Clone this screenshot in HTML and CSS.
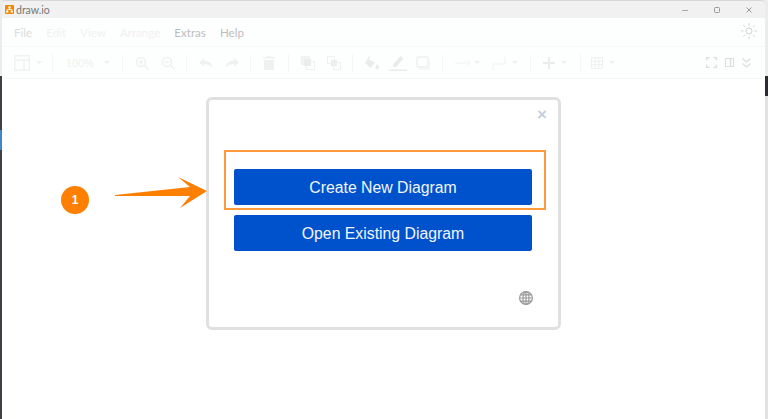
FILE: index.html
```html
<!DOCTYPE html>
<html lang="en">
<head>
  <meta charset="UTF-8" />
  <meta name="viewport" content="width=device-width, initial-scale=1.0"/>
  <title>draw.io</title>
  <link rel="stylesheet" href="styles.css">
</head>
<body>

  <div class="window">
    <div class="titlebar">
      <svg class="logo" width="9" height="9" viewBox="0 0 12 12">
        <rect width="12" height="12" rx="1" fill="#f08705"/>
        <path d="M6 3v3M3 9V6h6v3" fill="none" stroke="#fff" stroke-width="1"/>
        <rect x="4.500" y="1.800" width="3" height="2.800" fill="#fff"/>
        <rect x="1.600" y="7.400" width="2.800" height="2.800" fill="#fff"/>
        <rect x="7.600" y="7.400" width="2.800" height="2.800" fill="#fff"/>
      </svg>
      <span class="app-name">draw.io</span>
      <div class="win-buttons">
        <svg width="6" height="10" viewBox="0 0 6 10"><path d="M0 5.500h6" stroke="#aaa"/></svg>
        <svg width="6" height="10" viewBox="0 0 6 10"><rect x=".5" y="2.500" width="5" height="5" rx="1" fill="none" stroke="#999"/></svg>
        <svg width="6" height="10" viewBox="0 0 6 10"><path d="M.5 2.500l5 5M5.500 2.500l-5 5" stroke="#999"/></svg>
      </div>
    </div>

    <div class="menubar">
      <a class="menu faint">File</a>
      <a class="menu off">Edit</a>
      <a class="menu off">View</a>
      <a class="menu off">Arrange</a>
      <a class="menu">Extras</a>
      <a class="menu">Help</a>
      <svg class="sun" width="16" height="16" viewBox="0 0 16 16" fill="none" stroke="#d2d2d2">
        <circle cx="8" cy="8" r="3"/>
        <path d="M8 0v2.500M8 13.500V16M0 8h2.500M13.500 8H16M2.300 2.300l1.800 1.800M11.900 11.900l1.800 1.800M2.300 13.700l1.800-1.800M11.900 4.100l1.800-1.800"/>
      </svg>
    </div>

    <div class="toolbar">
      <svg class="tool" width="16" height="16" viewBox="0 0 16 16" fill="none" stroke="#f0f0f0" stroke-width="1.500"><rect x=".75" y=".75" width="14.500" height="14.500"/><path d="M1 5h14M10 5v10"/></svg>
      <span class="caret"></span>
      <span class="sep first-sep"></span>
      <span class="zoom-level">100%</span>
      <span class="caret far"></span>
      <span class="sep"></span>
      <svg class="tool" width="14" height="14" viewBox="0 0 14 14" fill="none" stroke="#eee" stroke-width="1.600"><circle cx="6" cy="6" r="4.500"/><path d="M9.500 9.500L13.500 13.500M3.800 6h4.400M6 3.800v4.400"/></svg>
      <svg class="tool" width="14" height="14" viewBox="0 0 14 14" fill="none" stroke="#eee" stroke-width="1.600"><circle cx="6" cy="6" r="4.500"/><path d="M9.500 9.500L13.500 13.500M3.800 6h4.400"/></svg>
      <span class="sep"></span>
      <svg class="tool" width="14" height="10" viewBox="0 0 14 10"><path d="M5 0L0 4.500 5 8.500V6c3.500 0 6.500 1 8.500 3.500C13 5.500 10 2.800 5 2.500z" fill="#eee"/></svg>
      <svg class="tool" width="14" height="10" viewBox="0 0 14 10"><path d="M9 0l5 4.500L9 8.500V6C5.500 6 2.500 7 .5 9.500 1 5.500 4 2.800 9 2.500z" fill="#eee"/></svg>
      <span class="sep"></span>
      <svg class="tool trash" width="12" height="14" viewBox="0 0 12 14"><path d="M0 1h3.500l1-1h3l1 1H12v1.500H0zM1 4h10v10H1z" fill="#eee"/></svg>
      <span class="sep"></span>
      <svg class="tool" width="14" height="14" viewBox="0 0 14 14"><rect x=".5" y=".5" width="8" height="8" fill="#f2f2f2" stroke="#eee"/><rect x="5.500" y="5.500" width="8" height="8" fill="#fdfefe" stroke="#eee"/><rect x="3" y="3" width="7" height="7" fill="#e9e9e9"/></svg>
      <svg class="tool" width="14" height="14" viewBox="0 0 14 14"><rect x=".5" y=".5" width="7" height="7" fill="#fdfefe" stroke="#eee"/><rect x="6.500" y="6.500" width="7" height="7" fill="#fdfefe" stroke="#eee"/><rect x="4" y="4" width="6" height="6" fill="#ececec"/></svg>
      <span class="sep"></span>
      <svg class="tool" width="14" height="14" viewBox="0 0 14 14"><path d="M4 0l1.200 1L3.500 3 10 6.500 5.500 12 0 7 3 2.200z" fill="#e8e8e8"/><path d="M12.200 8c1 1.600 1.700 2.500 1.700 3.500a1.700 1.700 0 0 1-3.400 0c0-1 .7-1.900 1.700-3.500z" fill="#e8e8e8"/></svg>
      <svg class="tool line-tool" width="18" height="16" viewBox="0 0 18 16"><path d="M4 9.500L11.500 1l3 2.500L7 12H4zM0 14.500h18V16H0z" fill="#e8e8e8"/></svg>
      <svg class="tool line-tool shadow" width="14" height="14" viewBox="0 0 14 14" fill="none" stroke="#eee" stroke-width="1.500"><rect x="1" y="1" width="11" height="10" rx="1"/><path d="M3 13h10V3" stroke="#f4f4f4"/></svg>
      <span class="sep"></span>
      <svg class="tool connector" width="16" height="8" viewBox="0 0 16 8" fill="none" stroke="#f0f0f0"><path d="M0 4h15M12 1l3 3-3 3"/></svg>
      <span class="caret"></span>
      <svg class="tool waypoint" width="14" height="14" viewBox="0 0 14 14" fill="none" stroke="#f0f0f0" stroke-width="1.200"><path d="M1 14V8h12V1"/></svg>
      <span class="caret far"></span>
      <span class="sep"></span>
      <svg class="tool" width="12" height="12" viewBox="0 0 12 12"><path d="M5 0h2v5h5v2H7v5H5V7H0V5h5z" fill="#e8e8e8"/></svg>
      <span class="caret farther"></span>
      <span class="sep"></span>
      <svg class="tool table" width="12" height="12" viewBox="0 0 12 12" fill="none" stroke="#eee"><path d="M.5.500h11v11H.5zM.5 4.200h11M.5 7.800h11M4.200.5v11M7.800.5v11"/></svg>
      <span class="caret"></span>
      <div class="toolbar-right">
        <svg width="11" height="11" viewBox="0 0 11 11" fill="none" stroke="#ddd" stroke-width="1.300"><path d="M.7 3.500V.7h2.800M7.500.7h2.800v2.800M.7 7.500v2.800h2.800M7.500 10.300h2.800V7.500"/></svg>
        <svg width="9" height="9" viewBox="0 0 9 9" fill="none" stroke="#ddd"><rect x=".5" y=".5" width="8" height="8"/><path d="M5.500 .5v8" stroke-width="1.500"/></svg>
        <svg width="9" height="10" viewBox="0 0 9 10" fill="none" stroke="#ddd" stroke-width="1.200"><path d="M.5.500L4.500 4l4-3.500M.5 5.500l4 3.500 4-3.500"/></svg>
      </div>
    </div>

    <div class="canvas">
      <span class="edge edge-left"></span>
      <span class="edge edge-blue"></span>
      <span class="edge edge-right"></span>
      <span class="edge edge-right-light"></span>

      <div class="dialog">
        <span class="close">&#215;</span>
        <div class="actions">
          <button class="action">Create New Diagram</button>
          <button class="action">Open Existing Diagram</button>
        </div>
        <svg class="globe" width="14" height="14" viewBox="0 0 14 14" fill="none" stroke="#999" stroke-width="1.200">
          <circle cx="7" cy="7" r="6.400"/>
          <ellipse cx="7" cy="7" rx="3" ry="6.400"/>
          <path d="M7 .6v12.800M.6 7h12.800M1.500 3.800h11M1.500 10.200h11"/>
        </svg>
      </div>

      <!-- anotacoes do tutorial por cima do dialogo -->
      <span class="highlight"></span>
      <span class="step">1</span>
      <svg class="arrow" width="100" height="40" viewBox="0 0 100 40">
        <path d="M5 21L80 13 68 3 97 17 70 34 80 22 5 22z" fill="#ff7f00"/>
      </svg>
    </div>
  </div>

</body>
</html>
```

FILE: styles.css
```css
* {
  box-sizing: border-box;
  margin: 0;
  padding: 0;
}

html, body {
  height: 100%;
  overflow: hidden;
}

body {
  font-family: "Liberation Sans", Arial, sans-serif;
  background-color: #fff;
}

.window {
  display: flex;
  flex-direction: column;
  height: 100%;
  background-color: #ececec;
}

.titlebar {
  display: flex;
  align-items: center;
  height: 18px;
  padding: 0 0 0 3px;
  margin: 0 3px 0 2px;
  background-color: #f1f1f1;
  border-top: 1px solid #d8d8d8;
  border-top-left-radius: 3px;
  border-top-right-radius: 4px;
}

.logo {
  margin-right: 2px;
}

.app-name {
  font-family: Lato, sans-serif;
  font-size: 10.500px;
  color: #777;
}

.win-buttons {
  display: flex;
  gap: 26px;
  margin-left: auto;
  padding-right: 13px;
}

.menubar {
  display: flex;
  align-items: center;
  gap: 14px;
  height: 28px;
  padding: 1px 8px 0 12px;
  margin: 0 3px 0 2px;
  background-color: #fdfefe;
  font-family: Lato, sans-serif;
  font-size: 11.600px;
}

.menu {
  color: #bdbdbd;
}

.menu.faint {
  color: #dcdcdc;
}

.menu.off {
  color: #f1f1f1;
}

.sun {
  margin-left: auto;
  margin-top: -3px;
}

.toolbar {
  display: flex;
  align-items: center;
  height: 33px;
  padding: 0 14px 0 12px;
  margin: 0 3px 0 2px;
  background-color: #fdfefe;
  border-top: 1px solid #f8f8f8;
  border-bottom: 1px solid #f6f6f6;
}

.tool {
  flex: none;
  margin-right: 12px;
  opacity: 0.85;
}

.tool.line-tool {
  margin-right: 11px;
  margin-left: -2px;
}

.tool.trash {
  margin-right: 14px;
}

.tool.shadow {
  margin-right: 13px;
}

.tool.connector {
  margin-right: 9px;
}

.tool.waypoint {
  margin-left: 7px;
}

.tool.table {
  margin-left: -2px;
}

.caret {
  flex: none;
  width: 0;
  height: 0;
  margin: 0 5px 0 -6px;
  border-left: 3px solid transparent;
  border-right: 3px solid transparent;
  border-top: 3px solid #f0f0f0;
}

.caret.far {
  margin-right: 13px;
}

.caret.farther {
  margin-right: 14px;
}

.sep {
  flex: none;
  width: 1px;
  height: 18px;
  margin: 0 12px 0 -1px;
  background-color: #f6f6f6;
}

.sep.first-sep {
  margin-left: 5px;
}

.zoom-level {
  flex: none;
  width: 45px;
  padding-left: 1px;
  font-size: 11px;
  color: #f0f0f0;
}

.toolbar-right {
  display: flex;
  align-items: center;
  gap: 8px;
  margin-left: auto;
}

.canvas {
  position: relative;
  flex: 1;
  background-color: #fff;
}

/* restos da janela de tras, aparecem nas bordas */
.edge {
  position: absolute;
  width: 2px;
}

.edge-left {
  left: 0;
  top: -3px;
  bottom: 0;
  background-color: #3d4146;
}

.edge-blue {
  left: 0;
  top: 51px;
  height: 20px;
  background-color: #3f87c6;
}

.edge-right {
  right: 0;
  width: 3px;
  top: -3px;
  height: 20px;
  background-color: #2a2d33;
}

.edge-right-light {
  right: 0;
  width: 3px;
  top: 17px;
  bottom: 0;
  background-color: #e2e2e2;
}

.dialog {
  position: absolute;
  left: 206px;
  top: 18px;
  width: 355px;
  height: 233px;
  padding: 69px 26px 0 25px;
  background-color: #fff;
  border: 3px solid #e0e0e0;
  border-radius: 6px;
}

.close {
  position: absolute;
  top: 6px;
  right: 11px;
  font-size: 17px;
  font-weight: bold;
  line-height: 17px;
  color: #c3d0e0;
}

.actions {
  display: flex;
  flex-direction: column;
  gap: 10px;
}

.action {
  height: 36px;
  padding-top: 1px;
  background-color: #0052cc;
  color: #f2f6fc;
  border: none;
  border-radius: 2px;
  font-family: "Liberation Sans", Arial, sans-serif;
  font-size: 15.800px;
}

.globe {
  position: absolute;
  right: 25px;
  bottom: 22px;
}

.highlight {
  position: absolute;
  left: 224px;
  top: 71px;
  width: 322px;
  height: 60px;
  border: 2px solid #ff9a3c;
}

.step {
  position: absolute;
  left: 61px;
  top: 107px;
  width: 28px;
  height: 28px;
  background-color: #ff7f00;
  border-radius: 50%;
  color: #fff;
  font-size: 12px;
  font-weight: bold;
  line-height: 28px;
  text-align: center;
}

.arrow {
  position: absolute;
  left: 110px;
  top: 95px;
}
```
